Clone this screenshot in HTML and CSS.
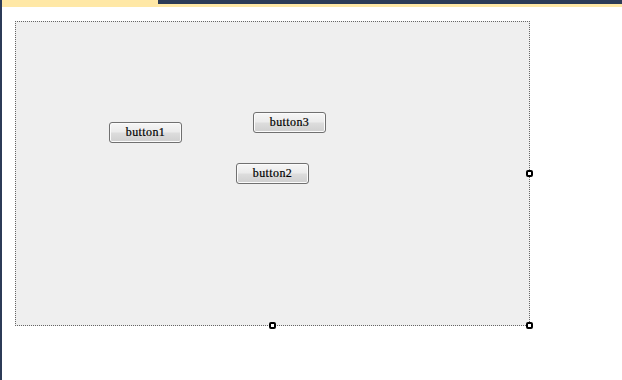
FILE: index.html
```html
<!DOCTYPE html>
<html>
<head>
<meta charset="utf-8">
<link rel="stylesheet" href="styles.css">
</head>
<body>
<div class="frame">
  <div class="edge"></div>
  <div class="main">
    <div class="topbar">
      <div class="tab"></div>
      <div class="strip">
        <div class="strip-dark"></div>
        <div class="strip-light"></div>
      </div>
    </div>
    <div class="workspace">
      <div class="canvas">
        <button class="btn b1">button1</button>
        <button class="btn b3">button3</button>
        <button class="btn b2">button2</button>
        <span class="handle h-bottom"></span>
        <span class="handle h-corner"></span>
        <span class="handle h-right"></span>
      </div>
    </div>
  </div>
</div>
</body>
</html>
```
FILE: styles.css
```css
html, body {
  margin: 0;
  padding: 0;
  background: #ffffff;
}
.frame {
  display: flex;
  width: 622px;
  height: 380px;
  overflow: hidden;
}
.edge {
  width: 2px;
  background: #2c3b57;
  flex: none;
}
.main {
  flex: 1;
  display: flex;
  flex-direction: column;
}
.topbar {
  display: flex;
  height: 7px;
  flex: none;
}
.tab {
  width: 156px;
  background: #ffe8a6;
}
.strip {
  flex: 1;
  display: flex;
  flex-direction: column;
}
.strip-dark {
  height: 4px;
  background: #2c3b57;
}
.strip-light {
  flex: 1;
  background: #ffe8a6;
}
.workspace {
  padding: 14px 0 0 13px;
}
.canvas {
  position: relative;
  box-sizing: border-box;
  width: 515px;
  height: 305px;
  border: 1px dotted #666666;
  background: #efefef;
}
.btn {
  position: absolute;
  box-sizing: border-box;
  width: 73px;
  height: 21px;
  margin: 0;
  padding: 0;
  border: 1px solid #707070;
  border-radius: 3px;
  background: linear-gradient(to bottom, #f6f6f6 0%, #ebebeb 48%, #dddddd 52%, #cfcfcf 100%);
  box-shadow: inset 0 0 0 1px #fbfbfb;
  font-family: "Liberation Serif", serif;
  font-size: 12px;
  font-weight: normal;
  letter-spacing: 0.4px;
  color: #000000;
  -webkit-text-stroke: 0.2px #000000;
  line-height: 19px;
  text-align: center;
}
.b1 { left: 93px; top: 100px; }
.b3 { left: 237px; top: 90px; }
.b2 { left: 220px; top: 141px; }
.handle {
  position: absolute;
  box-sizing: border-box;
  width: 7px;
  height: 7px;
  border: 2px solid #000000;
  border-radius: 2px;
  background: #ffffff;
}
.h-bottom { left: 253px; top: 300px; }
.h-corner { left: 510px; top: 300px; }
.h-right { left: 510px; top: 148px; }
```
